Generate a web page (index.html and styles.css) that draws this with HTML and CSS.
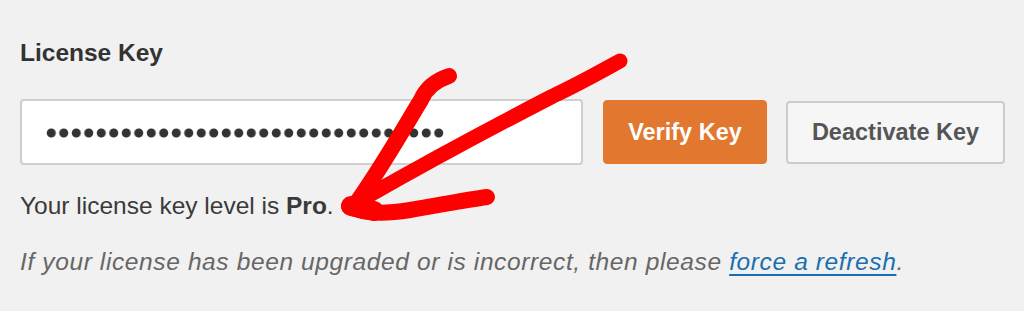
FILE: index.html
```html
<!DOCTYPE html>
<html lang="en">
<head>
<meta charset="utf-8">
<title>License Key</title>
<link rel="stylesheet" href="styles.css">
</head>
<body>
<div class="panel">
  <h2 class="label">License Key</h2>
  <div class="key-row">
    <div class="key-input"><span class="dots" aria-label="hidden license key"></span></div>
    <button class="btn btn-verify">Verify Key</button>
    <button class="btn btn-deactivate">Deactivate Key</button>
  </div>
  <p class="level">Your license key level is <strong>Pro</strong>.</p>
  <p class="note">If your license has been upgraded or is incorrect, then please <a href="#">force a refresh</a>.</p>
</div>
<svg class="arrow" width="1024" height="311" viewBox="0 0 1024 311" aria-hidden="true">
  <g fill="none" stroke="#fe0000" stroke-linecap="round" stroke-linejoin="round">
    <path d="M 620 61 C 600 72, 575 86, 553 96 C 520 113, 440 155, 368 196" stroke-width="15"/>
    <path d="M 449 76 C 437 80, 426 88, 421 100 C 405 126, 385 162, 357 202" stroke-width="16"/>
    <path d="M 349 206 C 362 214, 385 214, 410 210 C 440 205, 465 200, 487 197" stroke-width="16"/>
    <path d="M 351 206 L 374 211" stroke-width="20"/>
  </g>
</svg>
</body>
</html>
```

FILE: styles.css
```css
html, body {
  margin: 0;
  padding: 0;
  background: #f1f1f1;
}
body {
  width: 1024px;
  height: 311px;
  overflow: hidden;
  position: relative;
  font-family: "Liberation Sans", Arial, sans-serif;
}
.panel {
  padding: 38px 0 0 20px;
}
.label {
  margin: 0;
  font-size: 24.5px;
  line-height: 30px;
  font-weight: bold;
  color: #333;
}
.key-row {
  display: flex;
  align-items: center;
  gap: 20px;
  margin-top: 31px;
  height: 66px;
}
.key-input {
  box-sizing: border-box;
  width: 563px;
  height: 66px;
  background: #fff;
  border: 2px solid #cfcfcf;
  border-radius: 4px;
  display: flex;
  align-items: center;
  padding-left: 23px;
}
.dots {
  display: block;
  width: 400px;
  height: 10px;
  margin-top: 1px;
  background-image: radial-gradient(circle, #333 4px, rgba(51,51,51,0) 5px);
  background-size: 12.5px 10px;
  background-repeat: repeat-x;
}
.btn {
  box-sizing: border-box;
  font-family: "Liberation Sans", Arial, sans-serif;
  font-size: 23.5px;
  font-weight: bold;
  border-radius: 4px;
  padding: 0;
  cursor: pointer;
}
.btn-verify {
  width: 164px;
  height: 64px;
  background: #e27730;
  border: 1px solid #e27730;
  color: #fff;
}
.btn-deactivate {
  width: 219px;
  height: 63px;
  margin-left: -1px;
  background: #f6f6f6;
  border: 2px solid #cccccc;
  color: #555;
}
.level {
  margin: 26px 0 0;
  font-size: 24.5px;
  line-height: 30px;
  color: #3a3a3a;
}
.level strong {
  font-weight: bold;
}
.note {
  margin: 26px 0 0;
  font-size: 24.5px;
  line-height: 30px;
  font-style: italic;
  letter-spacing: 0.62px;
  color: #666;
}
.note a {
  color: #1a6fb0;
  text-decoration: underline;
  text-decoration-thickness: 2px;
  text-underline-offset: 4px;
}
.arrow {
  position: absolute;
  left: 0;
  top: 0;
  pointer-events: none;
}
```
